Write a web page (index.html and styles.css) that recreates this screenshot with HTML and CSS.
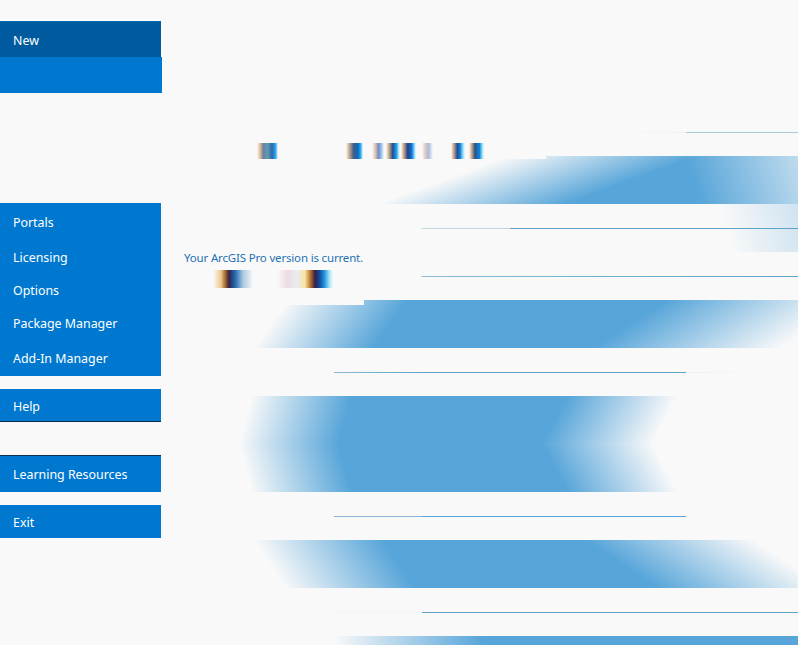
FILE: index.html
```html
<!DOCTYPE html>
<html lang="en">
<head>
<meta charset="utf-8">
<title>ArcGIS Pro</title>
<link rel="stylesheet" href="styles.css">
</head>
<body>
<div class="app">
  <nav class="side">
    <div class="group g-new">
      <div class="item item-new">New</div>
      <div class="item-blank"></div>
    </div>
    <div class="group g-settings">
      <div class="item it-portals">Portals</div>
      <div class="item it-licensing">Licensing</div>
      <div class="item it-options">Options</div>
      <div class="item it-package">Package Manager</div>
      <div class="item it-addin">Add-In Manager</div>
    </div>
    <div class="group g-help"><div class="item">Help</div></div>
    <div class="group g-learn"><div class="item">Learning Resources</div></div>
    <div class="group g-exit"><div class="item">Exit</div></div>
  </nav>
  <main class="main">
    <div class="rule r1"></div>
    <div class="smear-row">
      <div class="smear s1"></div><div class="smear s2"></div><div class="smear s3"></div><div class="smear s4a"></div><div class="smear s4b"></div><div class="smear s5"></div><div class="smear s6"></div><div class="smear s7"></div>
    </div>
    <div class="band b1"></div>
    <div class="pale"><div class="rule r2"></div></div>
    <p class="status">Your ArcGIS Pro version is current.</p>
    <div class="rule r3"></div>
    <div class="smear-row2"><div class="smear t1"></div><div class="smear t2"></div></div>
    <div class="band b2"></div>
    <div class="rule r4"></div>
    <div class="band b3"></div>
    <div class="rule r5"></div>
    <div class="band b4"></div>
    <div class="rule r6"></div>
    <div class="band b5"></div>
  </main>
</div>
</body>
</html>
```
FILE: styles.css
```css
html, body { margin: 0; padding: 0; height: 100%; overflow: hidden; background: #f9f9f9; }
.app { display: flex; height: 645px; font-family: "Noto Sans", "Open Sans", sans-serif; font-size: 12.4px; }
.side { width: 161px; flex: none; padding-top: 21px; color: #fff; box-sizing: border-box; }
.group { background: #0078cf; }
.item { padding-left: 13px; line-height: 33px; }
.g-new { height: 72px; }
.item-new { background: #005aa0; border-top: 1px solid #0068b4; height: 35px; line-height: 37px; }
.item-blank { background: #0078cf; height: 36px; width: 162px; }
.g-settings { margin-top: 110px; height: 173px; }
.it-portals { height: 37px; line-height: 40px; }
.it-licensing { height: 33px; line-height: 36px; }
.it-options { height: 33px; line-height: 35px; }
.it-package { height: 35px; line-height: 35px; }
.it-addin { height: 35px; line-height: 35px; }
.g-help { margin-top: 13px; height: 33px; border-bottom: 1px solid #0a2f4f; box-sizing: border-box; }
.g-help .item { line-height: 35px; }
.g-learn { margin-top: 33px; height: 37px; border-top: 1px solid #0a2f4f; box-sizing: border-box; }
.g-learn .item { line-height: 37px; }
.g-exit { margin-top: 13px; height: 33px; }
.g-exit .item { line-height: 35px; }

.main { position: relative; flex: 1; min-width: 0; }
.rule { height: 1px; background: #5fa3c9; }
.band { height: 48px; background-color: #57a5d9; }
.r1 { margin: 132px 0 0 0; background: linear-gradient(90deg, #f9f9f9 440px, #f2f2f2 525px, #a9cbe0 525px, #a9cbe0 100%); }

.smear-row { position: absolute; top: 143px; left: 96px; height: 16px; width: 230px; }
.smear-row2 { position: absolute; top: 270px; left: 52px; height: 18px; width: 120px; }
.smear { position: absolute; top: 0; height: 100%; }
.s1 { left: 0; width: 21px; background: linear-gradient(90deg, #f9f9f9, #e8c9a6 12%, #6f7f98 30%, #5e9bb8 50%, #2a6aa8 72%, #2aa5ef 88%, #f9f9f9); }
.s2 { left: 89px; width: 17px; background: linear-gradient(90deg, #f9f9f9, #d9b89a 15%, #3f5c8c 45%, #0a6ab8 70%, #22a6f2 85%, #f9f9f9); }
.s3 { left: 115px; width: 12px; background: linear-gradient(90deg, #f9f9f9, #e5c9b5 25%, #6f8cc0 55%, #9fc8ec 80%, #f9f9f9); }
.s4a { left: 129px; width: 14px; background: linear-gradient(90deg, #f9f9f9, #d8b68e 18%, #254c8e 48%, #1ea0ef 75%, #aee6fa 90%, #f9f9f9); }
.s4b { left: 144px; width: 15px; background: linear-gradient(90deg, #f9f9f9, #d8b68e 15%, #243f85 45%, #0a78d6 72%, #8fdcfa 90%, #f9f9f9); }
.s5 { left: 165px; width: 11px; background: linear-gradient(90deg, #f9f9f9, #e0c8c0 30%, #a9bce0 60%, #f9f9f9); }
.s6 { left: 194px; width: 14px; background: linear-gradient(90deg, #f9f9f9, #d8a888 18%, #1f4d96 45%, #0f7fd8 65%, #8fdcfa 85%, #f9f9f9); }
.s7 { left: 212px; width: 15px; background: linear-gradient(90deg, #f9f9f9, #d8b68e 15%, #2a5088 40%, #0c86d8 70%, #8fe0f8 88%, #f9f9f9); }
.t1 { left: 0; width: 40px; background: linear-gradient(90deg, #f9f9f9, #f0c890 20%, #a8702e 30%, #3a2048 40%, #1f6ab0 55%, #a9c9e0 75%, #f9f9f9); }
.t2 { left: 64px; width: 56px; background: linear-gradient(90deg, #f9f9f9, #eedbe0 18%, #e8ecf4 36%, #fbe49e 50%, #b0702e 60%, #3a1c48 68%, #0f4e98 76%, #1f8ede 84%, #a8e8fb 94%, #f9f9f9); }

.b1 {
  margin-top: 23px;
  clip-path: polygon(0 3px, 385px 3px, 385px 0, 100% 0, 100% 100%, 0 100%);
  background-image:
    linear-gradient(160deg, #f9f9f9 119px, rgba(249,249,249,0) 184px),
    linear-gradient(73deg, rgba(249,249,249,0) 515px, rgba(249,249,249,.65) 625px);
}
.pale { height: 48px; background: linear-gradient(75deg, rgba(87,165,217,0) 550px, rgba(87,165,217,.25) 625px); display: flex; align-items: center; }
.pale .rule { width: 100%; background: linear-gradient(90deg, #f9f9f9 260px, #c6d6df 261px, #c6d6df 349px, #5fa3c9 349px); }
.status { position: absolute; top: 249px; left: 23px; margin: 0; color: #1f72b4; font-size: 11.5px; letter-spacing: -0.17px; line-height: 17px; white-space: nowrap; }
.r3 { margin-top: 24px; background: linear-gradient(90deg, #f9f9f9 260px, #8dbcd6 261px, #5fa3c9 100%); }
.b2 {
  margin-top: 23px;
  clip-path: polygon(0 5px, 203px 5px, 203px 0, 100% 0, 100% 100%, 0 100%);
  background-image:
    linear-gradient(126deg, #f9f9f9 103px, rgba(249,249,249,0) 200px),
    linear-gradient(147deg, rgba(249,249,249,0) 275px, #f9f9f9 378px);
}
.r4 { margin-top: 24px; margin-left: 173px; width: 436px; background: linear-gradient(90deg, #8fb9d3, #5fa3c9 88px, #5fa3c9 352px, #eef2f4 352px, #f9f9f9 436px); }
.b3 {
  margin-top: 23px; height: 96px;
  margin-left: 80px; width: 436px;
  background-image:
    linear-gradient(105deg, #f9f9f9 10px, rgba(249,249,249,0) 107px),
    linear-gradient(75deg, #f9f9f9 10px, rgba(249,249,249,0) 107px),
    linear-gradient(118deg, rgba(249,249,249,0) 288px, #f9f9f9 386px),
    linear-gradient(62deg, rgba(249,249,249,0) 288px, #f9f9f9 386px);
  background-size: 100% 50%;
  background-position: 0 0, 0 100%, 0 0, 0 100%;
  background-repeat: no-repeat;
}
.r5 { margin-top: 24px; margin-left: 173px; width: 352px; background: linear-gradient(90deg, #8db3d6, #8db3d6 88px, #57a5d9 88px); }
.b4 {
  margin-top: 23px;
  background-image:
    linear-gradient(56deg, #f9f9f9 103px, rgba(249,249,249,0) 211px),
    linear-gradient(34deg, rgba(249,249,249,0) 277px, #f9f9f9 372px);
}
.r6 { margin-top: 24px; margin-left: 173px; background: linear-gradient(90deg, #f3f4f5, #f3f4f5 88px, #5fa3c9 88px); }
.b5 {
  margin-top: 23px; margin-left: 173px; height: 9px;
  background-image: linear-gradient(90deg, #f9f9f9, rgba(249,249,249,0) 150px);
}
```
